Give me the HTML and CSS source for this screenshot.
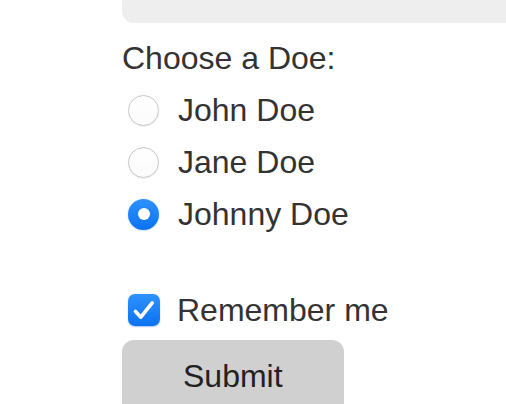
FILE: index.html
```html
<!DOCTYPE html>
<html lang="en">
<head>
<meta charset="utf-8">
<title>Choose a Doe</title>
<link rel="stylesheet" href="styles.css">
</head>
<body>
<form class="form">
  <div class="field-box"></div>
  <div class="legend">Choose a Doe:</div>
  <label class="option"><span class="radio"></span>John Doe</label>
  <label class="option"><span class="radio"></span>Jane Doe</label>
  <label class="option"><span class="radio radio-on"><span class="dot"></span></span>Johnny Doe</label>
  <label class="option option-remember"><span class="check"><svg viewBox="0 0 32 32" width="32" height="32"><path d="M7.5 17.5 L12.8 23.2 L24.2 8.8" fill="none" stroke="#fff" stroke-width="3.6" stroke-linecap="round" stroke-linejoin="round"/></svg></span>Remember me</label>
  <div class="actions"><span class="button">Submit</span></div>
</form>
</body>
</html>
```

FILE: styles.css
```css
html, body {
  margin: 0;
  padding: 0;
  background: #ffffff;
  overflow: hidden;
}
body {
  width: 506px;
  height: 404px;
  font-family: "Liberation Sans", Arial, Helvetica, sans-serif;
  font-size: 32px;
  line-height: 37px;
  color: #333333;
}
.form {
  padding-left: 122px;
  display: flex;
  flex-direction: column;
  align-items: flex-start;
}
.field-box {
  align-self: stretch;
  height: 23px;
  background: #eeeeee;
  border-bottom-left-radius: 12px;
}
.legend {
  margin-top: 17px;
  height: 37px;
  margin-bottom: 7px;
}
.option {
  display: flex;
  align-items: center;
  height: 52px;
}
.radio {
  box-sizing: border-box;
  width: 31px;
  height: 31px;
  margin: 0 19px 0 6px;
  border-radius: 50%;
  border: 1px solid #c9c9c9;
  background: linear-gradient(#ffffff, #fbfbfb);
  box-shadow: 0 0.5px 1px rgba(0,0,0,0.12);
  display: flex;
  align-items: center;
  justify-content: center;
}
.radio-on {
  border: none;
  background: linear-gradient(#2f92ff, #0a72f2);
  box-shadow: 0 0.5px 1.5px rgba(0,90,220,0.35);
}
.dot {
  width: 12px;
  height: 12px;
  border-radius: 50%;
  background: #ffffff;
}
.option-remember {
  margin-top: 44px;
}
.check {
  width: 32px;
  height: 32px;
  margin: 0 17px 0 6px;
  border-radius: 7px;
  background: linear-gradient(#2f92ff, #0a72f2);
  box-shadow: 0 0.5px 1.5px rgba(0,90,220,0.35);
  display: flex;
}
.actions {
  margin-top: 4px;
}
.button {
  display: block;
  padding: 18px 61px 30px;
  background: #d0d0d0;
  border-radius: 12px;
  color: #222222;
}
```
